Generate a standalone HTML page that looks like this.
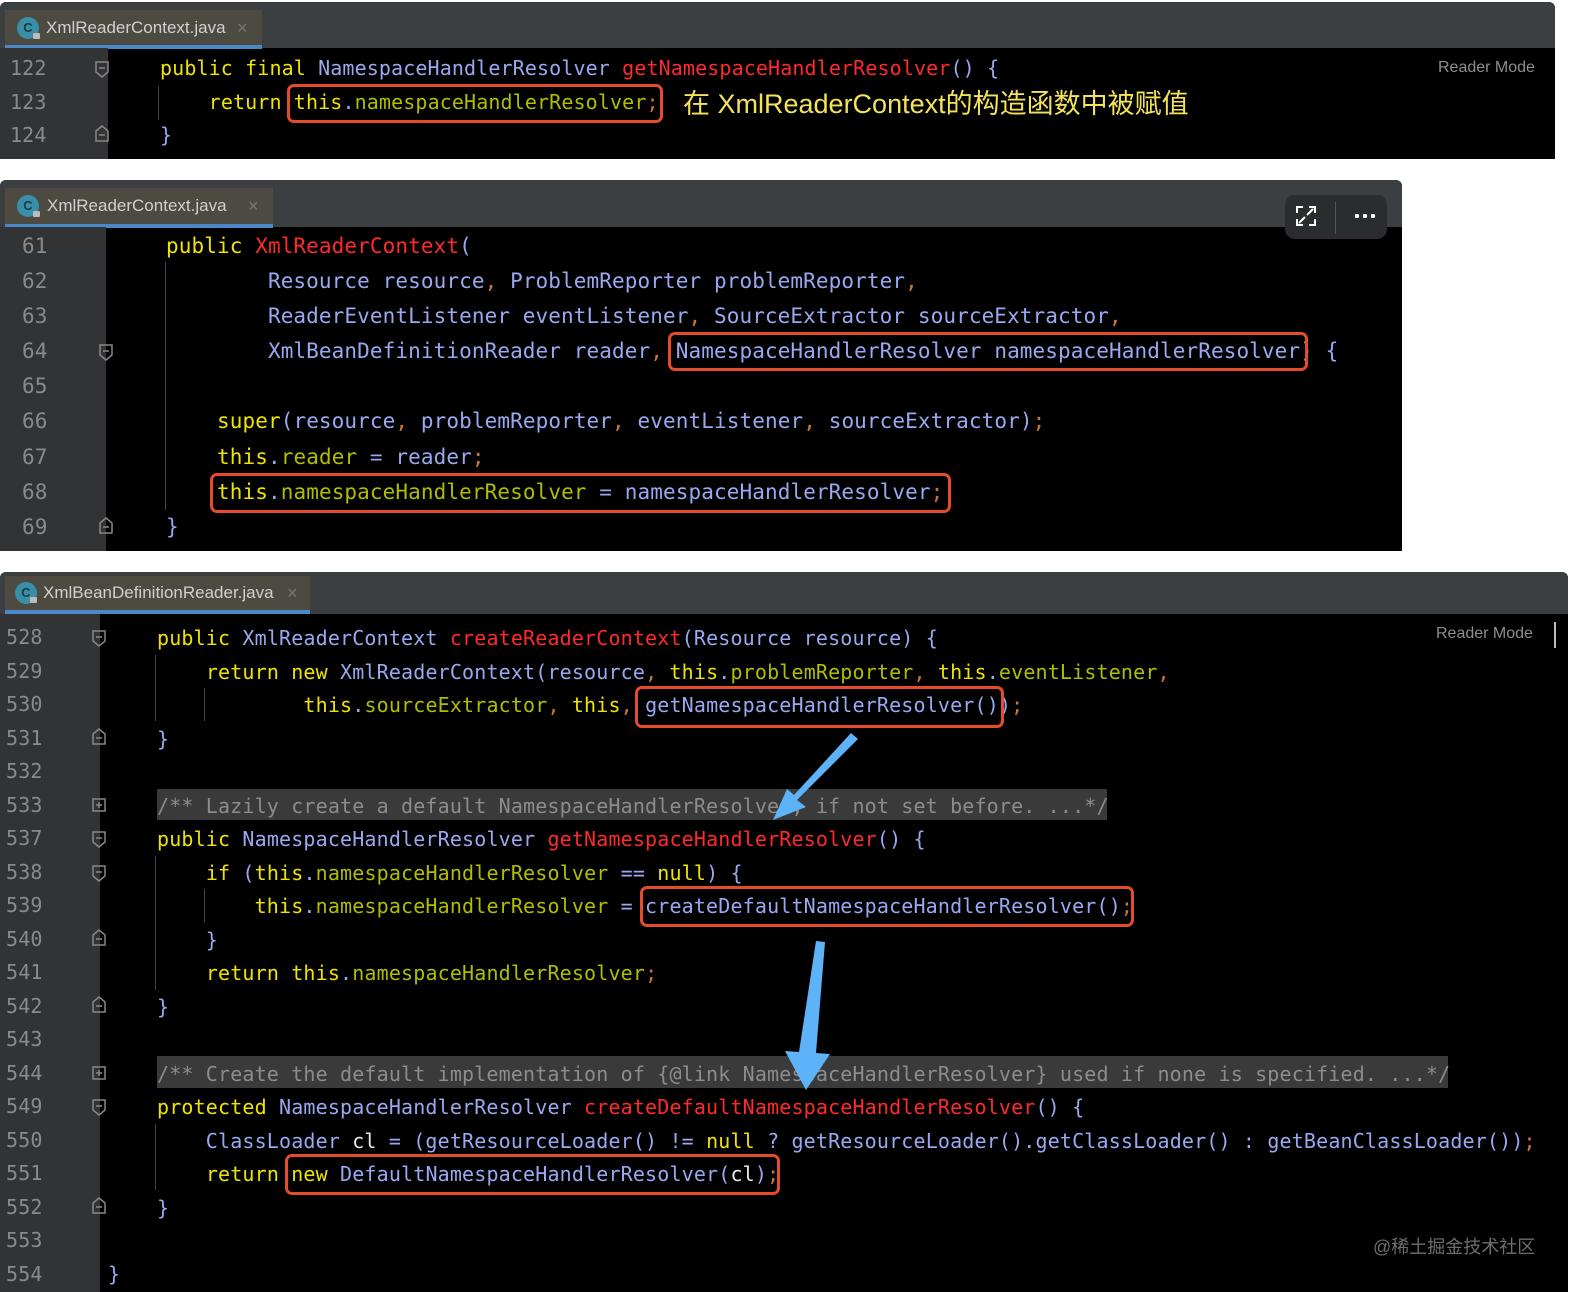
<!DOCTYPE html>
<html><head><meta charset="utf-8">
<style>
*{margin:0;padding:0;box-sizing:border-box}
body{width:1572px;height:1292px;background:#fff;position:relative;overflow:hidden;font-family:"DejaVu Sans Mono","Liberation Mono",monospace}
.panel{position:absolute;background:#000;overflow:hidden;border-radius:6px 6px 0 0}
.bar{position:absolute;left:0;top:0;right:0;background:#3c3f41}
.tab{position:absolute;left:5px;top:8px;background:#4d4a42;border-bottom:4px solid #4a88c7;font-family:"Liberation Sans",sans-serif;color:#d0d0d0;font-size:17px;white-space:nowrap}
.tab .ic{position:absolute;left:12px;width:22px;height:22px;border-radius:50%;background:#3a8fa8;color:#1e3a44;font-size:13px;font-weight:bold;text-align:center;line-height:22px}
.tab .lk{position:absolute;width:7px;height:6px;background:#bbb;border-radius:1px}
.tab .x{position:absolute;color:#777;font-size:18px}
.gut{position:absolute;left:0;bottom:0;background:#313335}
.ln{position:absolute;left:0;color:#8a8a8a;white-space:pre}
.l{position:absolute;white-space:pre;color:#9aa8f0}
.k{color:#eee400}.m{color:#ff2a2a}.f{color:#b0bd00}.p{color:#cc7832}.w{color:#e8e8e8}.c{color:#8c8c8c}
.box{position:absolute;border:3px solid #e44c2c;border-radius:7px}
.guide{position:absolute;width:1px;background:#444}
.cm{position:absolute;background:#3a3a3a}
.rm{position:absolute;font-family:"Liberation Sans",sans-serif;color:#8e8e8e;font-size:16px}
</style></head><body>

<!-- PANEL 1 -->
<div class="panel" style="left:0;top:2px;width:1555px;height:157px">
 <div class="bar" style="height:46px"></div>
 <div class="tab" style="width:257px;height:39px;line-height:36px;padding-left:41px">XmlReaderContext.java<div class="ic" style="top:7px">C</div><div class="lk" style="left:28px;top:23px"></div><span class="x" style="left:232px;top:0">×</span></div>
 <div class="gut" style="top:46px;width:108px"></div>
</div>
<div class="rm" style="left:1438px;top:59px">Reader Mode</div>
<div style="font-size:20px;letter-spacing:0.12px">
 <div class="ln" style="left:10px;top:52px;line-height:33px">122</div>
 <div class="ln" style="left:10px;top:86px;line-height:33px">123</div>
 <div class="ln" style="left:10px;top:119px;line-height:33px">124</div>
 <div class="l" style="left:160px;top:52px;line-height:33px"><span class="k">public final </span>NamespaceHandlerResolver <span class="m">getNamespaceHandlerResolver</span>() {</div>
 <div class="l" style="left:160px;top:86px;line-height:33px">    <span class="k">return this</span>.<span class="f">namespaceHandlerResolver</span><span class="p">;</span></div>
 <div class="l" style="left:160px;top:119px;line-height:33px">}</div>
</div>
<div class="guide" style="left:158px;top:86px;height:34px"></div>
<div class="box" style="left:287px;top:84px;width:376px;height:39px"></div>
<div style="position:absolute;left:683px;top:82px;font-family:'Liberation Sans','Noto Sans CJK SC',sans-serif;font-size:27px;color:#f3e35a;white-space:nowrap">在 XmlReaderContext的构造函数中被赋值</div>

<!-- PANEL 2 -->
<div class="panel" style="left:0;top:180px;width:1402px;height:371px">
 <div class="bar" style="height:47px"></div>
 <div class="tab" style="width:268px;height:40px;line-height:36px;padding-left:42px">XmlReaderContext.java<div class="ic" style="top:7px">C</div><div class="lk" style="left:28px;top:23px"></div><span class="x" style="left:243px;top:0">×</span></div>
 <div style="position:absolute;left:1285px;top:15px;width:102px;height:44px;background:#2b2c2e;border-radius:10px"></div>
 <div style="position:absolute;left:1335px;top:22px;width:1px;height:32px;background:#555"></div>
 <div class="gut" style="top:47px;width:106px"></div>
</div>
<svg style="position:absolute;left:1295px;top:205px" width="22" height="22" viewBox="0 0 22 22" fill="none" stroke="#fff" stroke-width="2"><path d="M2 8V2h6M14 2h6v6M20 14v6h-6M8 20H2v-6M12 10l6-6M10 12l-6 6"/></svg>
<div style="position:absolute;left:1355px;top:214px;width:4px;height:4px;background:#fff;border-radius:1px;box-shadow:8px 0 #fff,16px 0 #fff"></div>
<div style="font-size:21px;letter-spacing:0.1px">
 <div class="ln" style="left:22px;top:229px;line-height:35.1px">61
62
63
64
65
66
67
68
69</div>
 <div class="l" style="left:166px;top:229px;line-height:35.1px"><span class="k">public </span><span class="m">XmlReaderContext</span>(
        Resource resource<span class="p">,</span> ProblemReporter problemReporter<span class="p">,</span>
        ReaderEventListener eventListener<span class="p">,</span> SourceExtractor sourceExtractor<span class="p">,</span>
        XmlBeanDefinitionReader reader<span class="p">,</span> NamespaceHandlerResolver namespaceHandlerResolver) {

    <span class="k">super</span>(resource<span class="p">,</span> problemReporter<span class="p">,</span> eventListener<span class="p">,</span> sourceExtractor)<span class="p">;</span>
    <span class="k">this</span>.<span class="f">reader</span> = reader<span class="p">;</span>
    <span class="k">this</span>.<span class="f">namespaceHandlerResolver</span> = namespaceHandlerResolver<span class="p">;</span>
}</div>
</div>
<div class="guide" style="left:165px;top:262px;height:248px"></div>
<div class="box" style="left:668px;top:332px;width:640px;height:39px"></div>
<div class="box" style="left:210px;top:473px;width:741px;height:40px"></div>

<!-- PANEL 3 -->
<div class="panel" style="left:0;top:572px;width:1568px;height:720px">
 <div class="bar" style="height:42px"></div>
 <div class="tab" style="width:305px;height:38px;line-height:34px;padding-left:38px;top:4px">XmlBeanDefinitionReader.java<div class="ic" style="top:6px;left:10px">C</div><div class="lk" style="left:25px;top:21px"></div><span class="x" style="left:282px;top:0">×</span></div>
 <div class="gut" style="top:42px;width:100px"></div>
</div>
<div class="rm" style="left:1436px;top:625px">Reader Mode</div>
<div style="position:absolute;left:1554px;top:622px;width:2px;height:26px;background:#bbb"></div>
<div class="cm" style="left:157px;top:789px;width:950px;height:31px"></div>
<div class="cm" style="left:157px;top:1056px;width:1291px;height:32px"></div>
<div style="font-size:20px;letter-spacing:0.16px">
 <div class="ln" style="left:6px;top:621px;line-height:33.5px">528
529
530
531
532
533
537
538
539
540
541
542
543
544
549
550
551
552
553
554</div>
</div>
<div style="font-size:20px;letter-spacing:0.16px;line-height:33.5px">
 <div class="l" style="left:157px;top:622px"><span class="k">public </span>XmlReaderContext <span class="m">createReaderContext</span>(Resource resource) {
    <span class="k">return new </span>XmlReaderContext(resource<span class="p">,</span> <span class="k">this</span>.<span class="f">problemReporter</span><span class="p">,</span> <span class="k">this</span>.<span class="f">eventListener</span><span class="p">,</span>
            <span class="k">this</span>.<span class="f">sourceExtractor</span><span class="p">,</span> <span class="k">this</span><span class="p">,</span> getNamespaceHandlerResolver())<span class="p">;</span>
}

<span class="c">/** Lazily create a default NamespaceHandlerResolver, if not set before. ...*/</span>
<span class="k">public </span>NamespaceHandlerResolver <span class="m">getNamespaceHandlerResolver</span>() {
    <span class="k">if </span>(<span class="k">this</span>.<span class="f">namespaceHandlerResolver</span> == <span class="k">null</span>) {
        <span class="k">this</span>.<span class="f">namespaceHandlerResolver</span> = createDefaultNamespaceHandlerResolver()<span class="p">;</span>
    }
    <span class="k">return this</span>.<span class="f">namespaceHandlerResolver</span><span class="p">;</span>
}

<span class="c">/** Create the default implementation of {@link NamespaceHandlerResolver} used if none is specified. ...*/</span>
<span class="k">protected </span>NamespaceHandlerResolver <span class="m">createDefaultNamespaceHandlerResolver</span>() {
    ClassLoader <span class="w">cl</span> = (getResourceLoader() != <span class="k">null</span> ? getResourceLoader().getClassLoader() : getBeanClassLoader())<span class="p">;</span>
    <span class="k">return new </span>DefaultNamespaceHandlerResolver(<span class="w">cl</span>)<span class="p">;</span>
}

</div>
 <div class="l" style="left:108px;top:1258px">}</div>
</div>
<div class="guide" style="left:155px;top:655px;height:66px"></div>
<div class="guide" style="left:204px;top:688px;height:33px"></div>
<div class="guide" style="left:155px;top:856px;height:134px"></div>
<div class="guide" style="left:204px;top:889px;height:33px"></div>
<div class="guide" style="left:155px;top:1124px;height:66px"></div>
<div class="box" style="left:635px;top:686px;width:369px;height:42px"></div>
<div class="box" style="left:640px;top:886px;width:494px;height:41px"></div>
<div class="box" style="left:285px;top:1154px;width:495px;height:41px"></div>

<!-- fold markers -->
<svg style="position:absolute;left:0;top:0" width="120" height="1292" fill="none" stroke="#888" stroke-width="1.5">
 <path d="M96 62h12v10l-6 5l-6-5z M99 68h6"/>
 <path d="M96 141h12v-10l-6-5l-6 5z M99 135h6"/>
 <path d="M100 345h12v10l-6 5l-6-5z M103 351h6"/>
 <path d="M100 533h12v-10l-6-5l-6 5z M103 527h6"/>
 <path d="M93 631h12v10l-6 5l-6-5z M96 637h6"/>
 <path d="M93 744h12v-10l-6-5l-6 5z M96 738h6"/>
 <path d="M93 799h12v12h-12z M96 805h6 M99 802v6"/>
 <path d="M93 832h12v10l-6 5l-6-5z M96 838h6"/>
 <path d="M93 866h12v10l-6 5l-6-5z M96 872h6"/>
 <path d="M93 945h12v-10l-6-5l-6 5z M96 939h6"/>
 <path d="M93 1012h12v-10l-6-5l-6 5z M96 1006h6"/>
 <path d="M93 1067h12v12h-12z M96 1073h6 M99 1070v6"/>
 <path d="M93 1100h12v10l-6 5l-6-5z M96 1106h6"/>
 <path d="M93 1213h12v-10l-6-5l-6 5z M96 1207h6"/>
</svg>

<!-- arrows -->
<svg style="position:absolute;left:0;top:0" width="1572" height="1292">
 <path d="M851 733 L858 739 L797 800 L806 807 L773 820 L787 789 L794 795 Z" fill="#5eb2f7"/>
 <path d="M816 941 L825 942 L816 1053 L830 1054 L806 1090 L785 1051 L799 1052 Z" fill="#5eb2f7"/>
</svg>

<div style="position:absolute;left:1373px;top:1233px;font-family:'Liberation Sans','Noto Sans CJK SC',sans-serif;font-size:18px;color:#6e6e6e">@稀土掘金技术社区</div>
</body></html>
